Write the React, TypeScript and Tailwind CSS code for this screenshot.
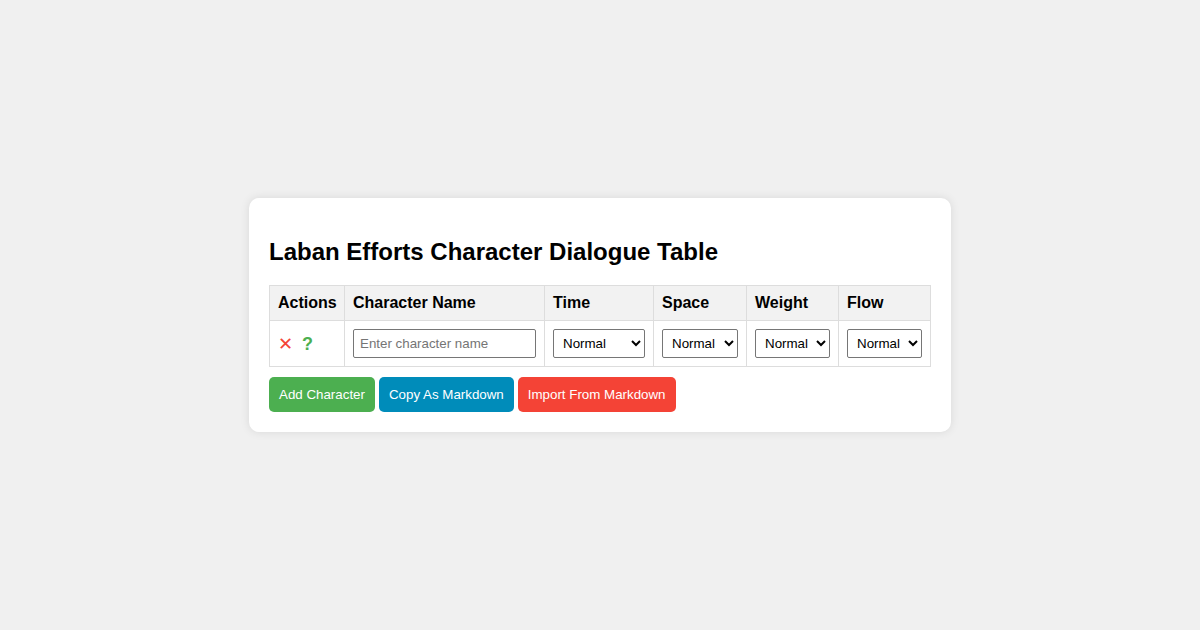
const times = ["Normal", "Sudden", "Sustained"];
const spaces = ["Normal", "Direct", "Indirect"];
const weights = ["Normal", "Strong", "Light"];
const flows = ["Normal", "Bound", "Free"];

function EffortSelect({ options, width }: { options: string[]; width: string }) {
  return (
    <select
      defaultValue="Normal"
      className={`${width} h-[29px] border border-[#767676] rounded-[2px] bg-white pl-[5px] text-[13.33px] text-black`}
    >
      {options.map((o) => (
        <option key={o}>{o}</option>
      ))}
    </select>
  );
}

export default function App() {
  return (
    <div
      className="h-[630px] w-full bg-[#f0f0f0] flex items-center justify-center"
      style={{ fontFamily: '"Liberation Sans", Arial, sans-serif' }}
    >
      <div className="w-[702px] bg-white rounded-[10px] shadow-[0_0_10px_rgba(0,0,0,0.1)] p-5">
        <h2 className="text-[24px] font-bold text-black mt-[20px] mb-[19px] leading-[28px]">
          Laban Efforts Character Dialogue Table
        </h2>
        <table className="w-[661px] table-fixed border-collapse text-[16px] leading-[normal] text-black">
          <thead>
            <tr className="bg-[#f2f2f2]">
              <th className="w-[75px] border border-[#ddd] px-2 py-2 text-left font-bold">Actions</th>
              <th className="w-[200px] border border-[#ddd] px-2 py-2 text-left font-bold">Character Name</th>
              <th className="w-[109px] border border-[#ddd] px-2 py-2 text-left font-bold">Time</th>
              <th className="w-[93px] border border-[#ddd] px-2 py-2 text-left font-bold">Space</th>
              <th className="w-[92px] border border-[#ddd] px-2 py-2 text-left font-bold">Weight</th>
              <th className="w-[92px] border border-[#ddd] px-2 py-2 text-left font-bold">Flow</th>
            </tr>
          </thead>
          <tbody>
            <tr>
              <td className="border border-[#ddd] px-2 py-2">
                <div className="flex items-center gap-[9px]">
                  <span className="text-[#f44336] text-[18px] leading-none">✕</span>
                  <span className="text-[#4CAF50] text-[18px] leading-none font-bold">?</span>
                </div>
              </td>
              <td className="border border-[#ddd] px-2 py-2">
                <input
                  placeholder="Enter character name"
                  className="w-[183px] h-[29px] border border-[#767676] rounded-[2px] px-[6px] text-[13.33px] placeholder:text-[#757575]"
                />
              </td>
              <td className="border border-[#ddd] px-2 py-2">
                <EffortSelect options={times} width="w-[92px]" />
              </td>
              <td className="border border-[#ddd] px-2 py-2">
                <EffortSelect options={spaces} width="w-[76px]" />
              </td>
              <td className="border border-[#ddd] px-2 py-2">
                <EffortSelect options={weights} width="w-[75px]" />
              </td>
              <td className="border border-[#ddd] px-2 py-2">
                <EffortSelect options={flows} width="w-[75px]" />
              </td>
            </tr>
          </tbody>
        </table>
        <div className="mt-[10px] flex gap-[4px] text-[13.33px] text-white">
          <button className="h-[35px] px-[10px] rounded-[5px] bg-[#4CAF50]">Add Character</button>
          <button className="h-[35px] px-[10px] rounded-[5px] bg-[#008CBA]">Copy As Markdown</button>
          <button className="h-[35px] px-[10px] rounded-[5px] bg-[#f44336]">Import From Markdown</button>
        </div>
      </div>
    </div>
  );
}
